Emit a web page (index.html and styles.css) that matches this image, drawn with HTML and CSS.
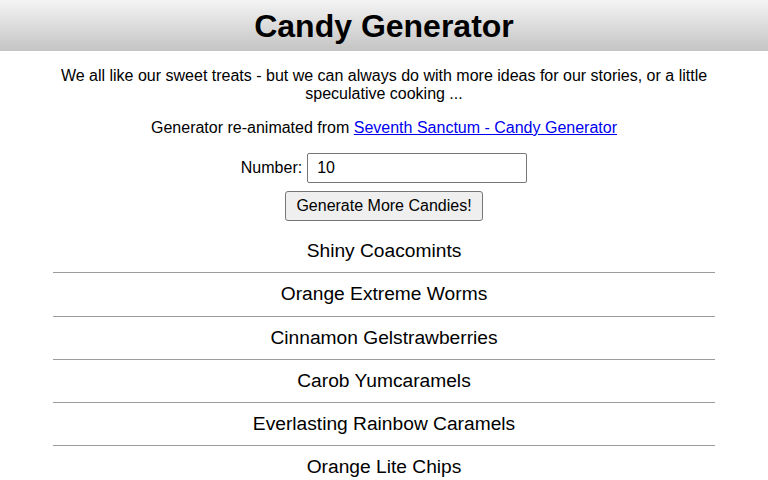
FILE: index.html
```html
<!DOCTYPE html>
<html>

<head lang="en">
    <meta charset="UTF-8">
    <title>Candy Generator</title>
    <link rel="stylesheet" href="styles.css">
</head>

<body>
    <div class="banner">
        <h1>Candy Generator</h1>
    </div>
    <div class="content">
        <p class="intro">We all like our sweet treats - but we can always do with more ideas for our stories, or a little speculative cooking ...</p>
        <p class="credit">Generator re-animated from <a href="javascript:void(0);">Seventh Sanctum - Candy Generator</a></p>
        <div class="controls">
            <div class="field">
                <label for="number">Number:</label>
                <input type="text" id="number" class="number-input" value="10">
            </div>
            <button id="generateBtn" class="generate-button">Generate More Candies!</button>
        </div>
        <div id="candies" class="candies">
            <div class="candy">Shiny Coacomints</div>
            <div class="candy">Orange Extreme Worms</div>
            <div class="candy">Cinnamon Gelstrawberries</div>
            <div class="candy">Carob Yumcaramels</div>
            <div class="candy">Everlasting Rainbow Caramels</div>
            <div class="candy">Orange Lite Chips</div>
        </div>
    </div>
</body>

</html>
```

FILE: styles.css
```css
body {
    margin: 0;
    font-family: "Liberation Sans", Arial, sans-serif;
    font-size: 16px;
    color: #000000;
    background: #ffffff;
}

.banner {
    height: 51px;
    background: linear-gradient(#f4f4f4, #c4c4c4);
    text-align: center;
}

.banner h1 {
    margin: 0;
    font-size: 32px;
    line-height: 52px;
    font-weight: bold;
}

.content {
    width: 662px;
    margin: 0 auto;
    padding-top: 16px;
    text-align: center;
}

.content p {
    margin: 0 0 16px 0;
}

.credit a {
    color: #0000ee;
}

.controls {
    display: flex;
    flex-direction: column;
    align-items: center;
    gap: 8px;
}

.field {
    display: flex;
    align-items: center;
    gap: 5px;
}

.number-input {
    box-sizing: border-box;
    width: 220px;
    height: 30px;
    padding: 0 9px;
    font-family: "Liberation Sans", Arial, sans-serif;
    font-size: 16px;
    border: #767676 solid 1px;
    border-radius: 2px;
}

.generate-button {
    box-sizing: border-box;
    height: 30px;
    padding: 0 10px;
    font-family: "Liberation Sans", Arial, sans-serif;
    font-size: 16px;
    color: #000000;
    background: #efefef;
    border: #767676 solid 1px;
    border-radius: 3px;
}

.candies {
    margin-top: 9px;
}

.candy {
    padding: 10px 0;
    font-size: 19.2px;
    line-height: 22.25px;
    border-bottom: #9c9c9c solid 1px;
}
```
